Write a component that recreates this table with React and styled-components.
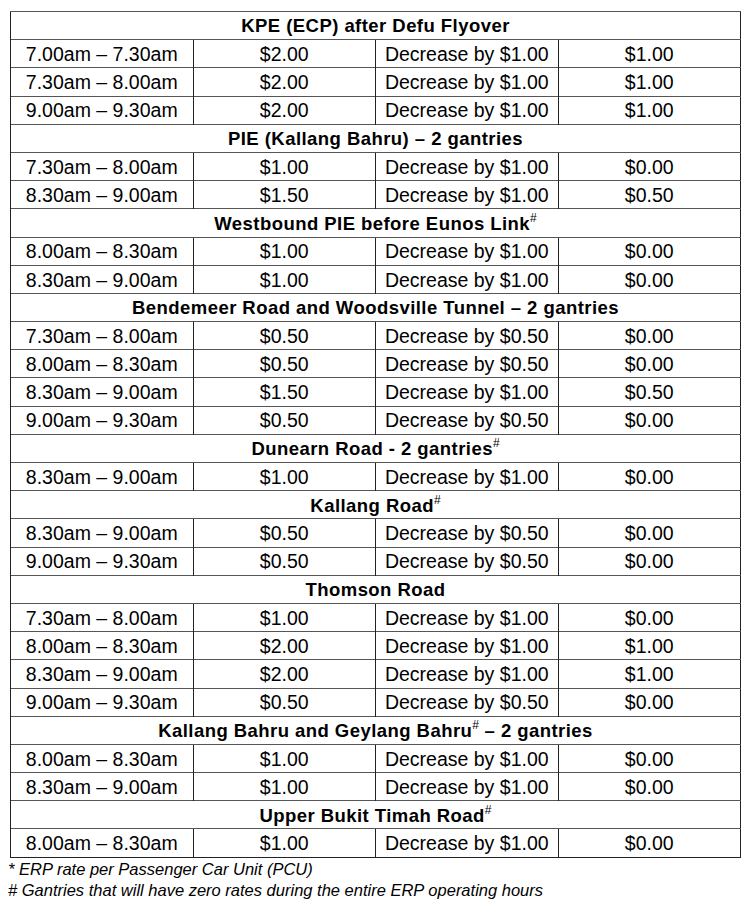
import styled, { createGlobalStyle } from "styled-components";

const GlobalStyle = createGlobalStyle`
  body {
    margin: 0;
    background: #ffffff;
    font-family: "Liberation Sans", Arial, sans-serif;
    color: #000000;
  }
`;

const sections = [
  {
    title: "KPE (ECP) after Defu Flyover",
    rows: [
      ["7.00am – 7.30am", "$2.00", "Decrease by $1.00", "$1.00"],
      ["7.30am – 8.00am", "$2.00", "Decrease by $1.00", "$1.00"],
      ["9.00am – 9.30am", "$2.00", "Decrease by $1.00", "$1.00"],
    ],
  },
  {
    title: "PIE (Kallang Bahru) – 2 gantries",
    rows: [
      ["7.30am – 8.00am", "$1.00", "Decrease by $1.00", "$0.00"],
      ["8.30am – 9.00am", "$1.50", "Decrease by $1.00", "$0.50"],
    ],
  },
  {
    title: "Westbound PIE before Eunos Link",
    mark: true,
    rows: [
      ["8.00am – 8.30am", "$1.00", "Decrease by $1.00", "$0.00"],
      ["8.30am – 9.00am", "$1.00", "Decrease by $1.00", "$0.00"],
    ],
  },
  {
    title: "Bendemeer Road and Woodsville Tunnel – 2 gantries",
    rows: [
      ["7.30am – 8.00am", "$0.50", "Decrease by $0.50", "$0.00"],
      ["8.00am – 8.30am", "$0.50", "Decrease by $0.50", "$0.00"],
      ["8.30am – 9.00am", "$1.50", "Decrease by $1.00", "$0.50"],
      ["9.00am – 9.30am", "$0.50", "Decrease by $0.50", "$0.00"],
    ],
  },
  {
    title: "Dunearn Road - 2 gantries",
    mark: true,
    rows: [["8.30am – 9.00am", "$1.00", "Decrease by $1.00", "$0.00"]],
  },
  {
    title: "Kallang Road",
    mark: true,
    rows: [
      ["8.30am – 9.00am", "$0.50", "Decrease by $0.50", "$0.00"],
      ["9.00am – 9.30am", "$0.50", "Decrease by $0.50", "$0.00"],
    ],
  },
  {
    title: "Thomson Road",
    rows: [
      ["7.30am – 8.00am", "$1.00", "Decrease by $1.00", "$0.00"],
      ["8.00am – 8.30am", "$2.00", "Decrease by $1.00", "$1.00"],
      ["8.30am – 9.00am", "$2.00", "Decrease by $1.00", "$1.00"],
      ["9.00am – 9.30am", "$0.50", "Decrease by $0.50", "$0.00"],
    ],
  },
  {
    title: "Kallang Bahru and Geylang Bahru",
    mark: true,
    suffix: " – 2 gantries",
    rows: [
      ["8.00am – 8.30am", "$1.00", "Decrease by $1.00", "$0.00"],
      ["8.30am – 9.00am", "$1.00", "Decrease by $1.00", "$0.00"],
    ],
  },
  {
    title: "Upper Bukit Timah Road",
    mark: true,
    rows: [["8.00am – 8.30am", "$1.00", "Decrease by $1.00", "$0.00"]],
  },
];

const App = () => {
  return (
    <>
      <GlobalStyle />
      <Page>
        <Table>
          <colgroup>
            <Col />
            <Col />
            <Col />
            <Col />
          </colgroup>
          <tbody>
            {sections.map((s) => (
              <Section key={s.title} section={s} />
            ))}
          </tbody>
        </Table>
        <Notes>
          <Note>* ERP rate per Passenger Car Unit (PCU)</Note>
          <Note># Gantries that will have zero rates during the entire ERP operating hours</Note>
        </Notes>
      </Page>
    </>
  );
};

const Section = ({ section }) => (
  <>
    <tr>
      <HeadCell colSpan={4}>
        {section.title}
        {section.mark && <Mark>#</Mark>}
        {section.suffix}
      </HeadCell>
    </tr>
    {section.rows.map((r, i) => (
      <tr key={i}>
        {r.map((v, j) => (
          <Cell key={j}>{v}</Cell>
        ))}
      </tr>
    ))}
  </>
);

export default App;

const Page = styled.div`
  width: 750px;
  padding: 11px 0 0 10px;
  box-sizing: border-box;
`;

const Table = styled.table`
  width: 731px;
  table-layout: fixed;
  border-collapse: collapse;
  border: 1px solid #222;
`;

const Col = styled.col`
  width: 25%;
`;

const Cell = styled.td`
  height: 28.2px;
  padding: 2px 0 0 0;
  box-sizing: border-box;
  border-left: 1px solid #222;
  border-top: 1px solid #555;
  text-align: center;
  font-size: 19.5px;
  line-height: 1;
  white-space: nowrap;
`;

const HeadCell = styled(Cell)`
  font-size: 18.5px;
  font-weight: 700;
  letter-spacing: 0.45px;
`;

const Mark = styled.sup`
  font-size: 12px;
  font-weight: 400;
  letter-spacing: 0;
  vertical-align: 8px;
  line-height: 0;
`;

const Notes = styled.div`
  margin-left: -2px;
  padding-top: 1px;
`;

const Note = styled.div`
  font-style: italic;
  font-size: 16.5px;
  line-height: 21px;
`;
